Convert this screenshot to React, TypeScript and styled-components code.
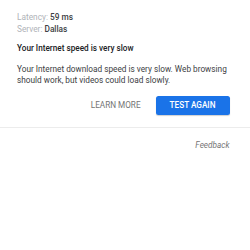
import React from "react";
import styled, { createGlobalStyle } from "styled-components";

const Global = createGlobalStyle`
  html, body { margin: 0; padding: 0; background: #ffffff; }
  body { font-family: Roboto, "Liberation Sans", Arial, sans-serif; }
`;

const Page = styled.div`
  display: flex;
  flex-direction: column;
  width: 250px;
`;

const Main = styled.div`
  display: flex;
  flex-direction: column;
  padding: 11px 20.5px 0 17px;
`;

const Stats = styled.div`
  display: flex;
  flex-direction: column;
  font-size: 8.3px;
  line-height: 12px;
`;

const StatLine = styled.div`
  color: #3c4043;
  font-weight: 500;
`;

const Label = styled.span`
  color: #b0b3b8;
  font-weight: 400;
`;

const Title = styled.div`
  margin-top: 7px;
  font-size: 8.2px;
  line-height: 12px;
  font-weight: 500;
  color: #202124;
`;

const Text = styled.p`
  margin: 9.5px 0 0;
  font-size: 8.25px;
  line-height: 11px;
  color: #3c4043;
`;

const Actions = styled.div`
  display: flex;
  justify-content: flex-end;
  align-items: center;
  gap: 15px;
  margin-top: 10px;
`;

const Button = styled.button<{ $primary?: boolean }>`
  font-family: Roboto, "Liberation Sans", Arial, sans-serif;
  font-size: 8.2px;
  font-weight: ${(p) => (p.$primary ? 500 : 400)};
  height: 19px;
  padding: 0 ${(p) => (p.$primary ? "14px" : "0")};
  border: none;
  border-radius: 2.5px;
  cursor: pointer;
  background: ${(p) => (p.$primary ? "#1a73e8" : "transparent")};
  color: ${(p) => (p.$primary ? "#ffffff" : "#757575")};
  box-shadow: ${(p) => (p.$primary ? "0 1px 1px rgba(60,64,67,0.25)" : "none")};
`;

const Divider = styled.hr`
  margin: 12.5px 0 0;
  border: none;
  border-top: 1px solid #ececec;
  width: 100%;
`;

const Footer = styled.div`
  display: flex;
  justify-content: flex-end;
  padding: 11px 20.5px 0 17px;
`;

const FeedbackLink = styled.a`
  font-size: 8.2px;
  line-height: 12px;
  font-style: italic;
  color: #757575;
  text-decoration: none;
`;

export default function App() {
  return (
    <>
      <Global />
      <Page>
        <Main>
          <Stats>
            <StatLine>
              <Label>Latency:</Label> 59 ms
            </StatLine>
            <StatLine>
              <Label>Server:</Label> Dallas
            </StatLine>
          </Stats>
          <Title>Your Internet speed is very slow</Title>
          <Text>
            Your Internet download speed is very slow. Web browsing should work, but videos could load slowly.
          </Text>
          <Actions>
            <Button>LEARN MORE</Button>
            <Button $primary>TEST AGAIN</Button>
          </Actions>
        </Main>
        <Divider />
        <Footer>
          <FeedbackLink href="#">Feedback</FeedbackLink>
        </Footer>
      </Page>
    </>
  );
}
